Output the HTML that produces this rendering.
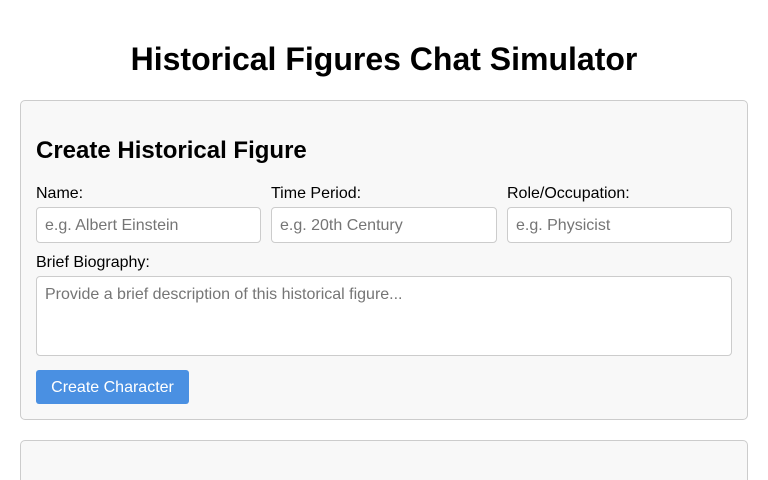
<!DOCTYPE html>
<html><head><style>
*{box-sizing:border-box}
html,body{margin:0;padding:0;width:768px;height:480px;overflow:hidden}
body{font-family:"Liberation Sans",sans-serif;background:#fff;color:#000;position:relative}
h1{margin:0;position:absolute;top:39px;left:0;width:768px;text-align:center;font-size:32px;line-height:40px;font-weight:bold}
.panel{position:absolute;left:20px;width:728px;background:#f8f8f8;border:1px solid #ccc;border-radius:5px}
h2{position:absolute;left:15px;top:35px;margin:0;font-size:24px;line-height:30px}
.lbl{position:absolute;font-size:16px;line-height:20px}
.inp{position:absolute;background:#fff;border:1px solid #ccc;border-radius:4px;color:#757575;font-size:16px;padding-left:8px;line-height:36px}
.btn{position:absolute;left:15px;top:269px;width:153px;height:34px;background:#4a90e2;color:#fff;border-radius:3px;font-size:16px;line-height:36px;text-align:center}
</style></head><body>
<h1>Historical Figures Chat Simulator</h1>
<div class="panel" style="top:100px;height:320px">
<h2>Create Historical Figure</h2>
<div class="lbl" style="left:15px;top:83px">Name:</div>
<div class="lbl" style="left:250px;top:83px">Time Period:</div>
<div class="lbl" style="left:486px;top:83px">Role/Occupation:</div>
<div class="inp" style="left:15px;top:106px;width:225px;height:36px">e.g. Albert Einstein</div>
<div class="inp" style="left:250px;top:106px;width:226px;height:36px">e.g. 20th Century</div>
<div class="inp" style="left:486px;top:106px;width:225px;height:36px">e.g. Physicist</div>
<div class="lbl" style="left:15px;top:152px">Brief Biography:</div>
<div class="inp" style="left:15px;top:175px;width:696px;height:80px;line-height:20px;padding-top:8px">Provide a brief description of this historical figure...</div>
<div class="btn">Create Character</div>
</div>
<div class="panel" style="top:440px;height:40px;border-bottom:none;border-bottom-left-radius:0;border-bottom-right-radius:0"></div>
</body></html>
